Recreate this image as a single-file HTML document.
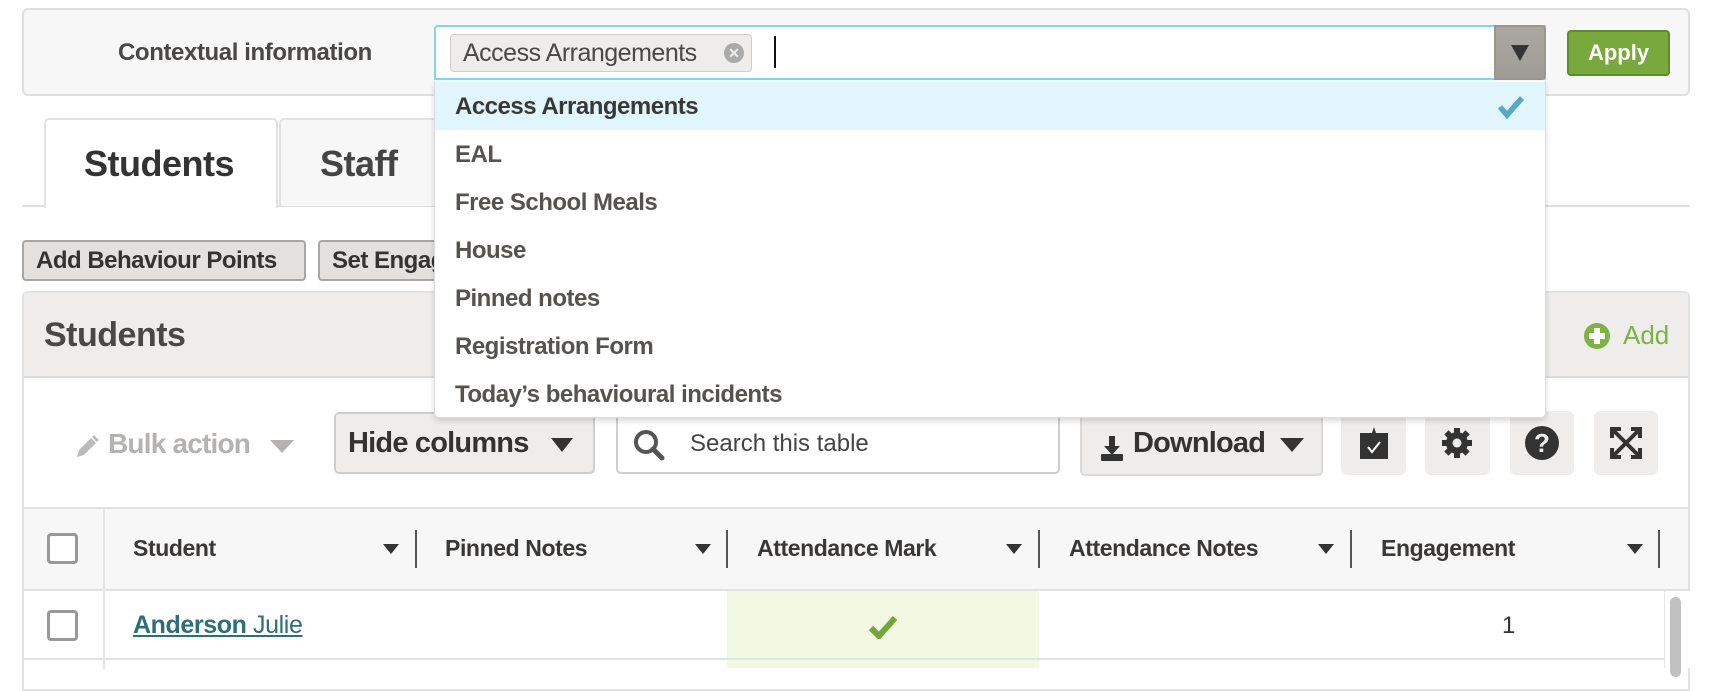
<!DOCTYPE html>
<html><head><meta charset="utf-8"><style>
*{box-sizing:border-box;margin:0;padding:0}
body{width:1710px;height:668px;overflow:hidden;background:#fff;font-family:"Liberation Sans",sans-serif;color:#3d3b39;position:relative}
.a{position:absolute}
.b{font-weight:bold}
</style></head><body>
<!-- top panel -->
<div class="a" style="left:22px;top:8px;width:1668px;height:88px;background:#f7f7f7;border:2px solid #e0e0e0;border-radius:6px"></div>
<div class="a b" style="left:118px;top:39px;font-size:24px;color:#4a4846;letter-spacing:-0.4px">Contextual information</div>
<div class="a" style="left:434px;top:25px;width:1112px;height:55px;background:#fff;border:2px solid #7dd8ec;border-radius:4px 0 0 0"></div>
<div class="a" style="left:450px;top:34px;width:302px;height:38px;background:#eeedec;border:1px solid #d0cecc;border-radius:4px"></div>
<div class="a" style="left:463px;top:39px;font-size:25px;color:#4a4846;letter-spacing:-0.5px">Access Arrangements</div>
<div class="a" style="left:724px;top:43px;width:20px;height:20px;border-radius:50%;background:#aaa;color:#eee;font-size:14px;line-height:20px;text-align:center;font-weight:bold">✕</div>
<div class="a" style="left:774px;top:36px;width:2px;height:32px;background:#111"></div>
<div class="a" style="left:1494px;top:25px;width:52px;height:55px;background:linear-gradient(#aaa6a2,#a09c98);border:2px solid #9a9692;border-radius:0 4px 4px 0"></div>
<div class="a" style="left:1511px;top:45px;width:0;height:0;border-left:9px solid transparent;border-right:9px solid transparent;border-top:16px solid #333"></div>
<div class="a b" style="left:1567px;top:30px;width:103px;height:46px;background:#79a93c;border:2px solid #5e8b2b;border-radius:4px;color:#fff;font-size:22px;text-align:center;line-height:42px">Apply</div>

<!-- tabs -->
<div class="a" style="left:22px;top:205px;width:1668px;height:2px;background:#ddd"></div>
<div class="a" style="left:44px;top:118px;width:234px;height:90px;background:#fff;border:2px solid #e2e2e2;border-bottom:none;border-radius:5px 5px 0 0"></div>
<div class="a b" style="left:84px;top:143px;font-size:36px;color:#333;letter-spacing:-0.5px">Students</div>
<div class="a" style="left:279px;top:118px;width:160px;height:88px;background:#f7f7f7;border:2px solid #e2e2e2;border-bottom:none;border-radius:5px 5px 0 0"></div>
<div class="a b" style="left:320px;top:143px;font-size:36px;color:#444;letter-spacing:-0.5px">Staff</div>

<!-- action buttons -->
<div class="a b" style="left:22px;top:240px;width:284px;height:41px;background:#e2e1df;border:2px solid #a9a7a5;border-radius:4px;font-size:24px;line-height:37px;padding-left:12px;color:#333;white-space:nowrap;letter-spacing:-0.5px">Add Behaviour Points</div>
<div class="a b" style="left:318px;top:240px;width:140px;height:41px;background:#e2e1df;border:2px solid #a9a7a5;border-radius:4px;font-size:24px;line-height:37px;padding-left:12px;color:#333;white-space:nowrap;overflow:hidden;letter-spacing:-0.5px">Set Engagement</div>

<!-- students panel -->
<div class="a" style="left:22px;top:291px;width:1668px;height:400px;border:2px solid #e2e2e2;border-radius:5px 5px 0 0"></div>
<div class="a" style="left:24px;top:293px;width:1664px;height:85px;background:#eeedec;border-bottom:2px solid #ddd"></div>
<div class="a b" style="left:44px;top:316px;font-size:34px;color:#4a4846;letter-spacing:-0.5px">Students</div>
<div class="a" style="left:1584px;top:323px;width:26px;height:26px;border-radius:50%;background:#7cb342"></div>
<div class="a" style="left:1594px;top:328px;width:6px;height:16px;background:#fff"></div>
<div class="a" style="left:1589px;top:333px;width:16px;height:6px;background:#fff"></div>
<div class="a" style="left:1623px;top:320px;font-size:26px;color:#7cb342">Add</div>

<!-- toolbar -->
<svg class="a" style="left:74px;top:433px" width="26" height="26" viewBox="0 0 26 26"><path d="M3 24l2-7L17 5l5 5-12 12z" fill="#bbb"/><path d="M18 4l2-2 5 5-2 2z" fill="#bbb"/></svg>
<div class="a b" style="left:108px;top:428px;font-size:28px;color:#b5b3b1;letter-spacing:-0.8px">Bulk action</div>
<div class="a" style="left:270px;top:440px;border-left:12px solid transparent;border-right:12px solid transparent;border-top:13px solid #b5b3b1"></div>
<div class="a b" style="left:334px;top:412px;width:261px;height:62px;background:#eeedec;border:2px solid #d0cecc;border-radius:5px;font-size:29px;line-height:58px;padding-left:12px;color:#333;letter-spacing:-0.8px">Hide columns</div>
<div class="a" style="left:551px;top:438px;border-left:11px solid transparent;border-right:11px solid transparent;border-top:14px solid #333"></div>
<div class="a" style="left:616px;top:412px;width:444px;height:62px;background:#fff;border:2px solid #d0cecc;border-radius:5px"></div>
<svg class="a" style="left:632px;top:428px" width="34" height="34" viewBox="0 0 34 34"><circle cx="14" cy="14" r="10" fill="none" stroke="#555" stroke-width="4"/><path d="M21 21l9 9" stroke="#555" stroke-width="5" stroke-linecap="round"/></svg>
<div class="a" style="left:690px;top:430px;font-size:24px;color:#444">Search this table</div>
<div class="a" style="left:1080px;top:412px;width:243px;height:64px;background:#eeedec;border:2px solid #dcdad8;border-radius:5px"></div>
<svg class="a" style="left:1100px;top:434px" width="24" height="28" viewBox="0 0 24 28"><path d="M9 2h6v10h5l-8 9-8-9h5z" fill="#333"/><rect x="1" y="20" width="22" height="7" rx="1" fill="#333"/></svg>
<div class="a b" style="left:1133px;top:427px;font-size:29px;color:#333;letter-spacing:-0.8px">Download</div>
<div class="a" style="left:1280px;top:438px;border-left:12px solid transparent;border-right:12px solid transparent;border-top:14px solid #333"></div>
<div class="a" style="left:1341px;top:411px;width:65px;height:64px;background:#eeedec;border-radius:6px"></div>
<svg class="a" style="left:1357px;top:425px" width="34" height="36" viewBox="0 0 34 36"><path d="M3 8h12l2-6 2 6h12v26H3z" fill="#333"/><path d="M11 22l4 5 8-10" stroke="#fff" stroke-width="2" fill="none"/></svg>
<div class="a" style="left:1425px;top:411px;width:65px;height:64px;background:#eeedec;border-radius:6px"></div>
<svg class="a" style="left:1440px;top:426px" width="34" height="34" viewBox="0 0 34 34"><g fill="#333"><circle cx="17" cy="17" r="11"/><rect x="14" y="2" width="6" height="30"/><rect x="2" y="14" width="30" height="6"/><rect x="14" y="2" width="6" height="30" transform="rotate(45 17 17)"/><rect x="14" y="2" width="6" height="30" transform="rotate(-45 17 17)"/></g><circle cx="17" cy="17" r="4.5" fill="#eeedec"/></svg>
<div class="a" style="left:1510px;top:411px;width:64px;height:64px;background:#eeedec;border-radius:6px"></div>
<div class="a b" style="left:1525px;top:426px;width:34px;height:34px;border-radius:50%;background:#333;color:#eeedec;text-align:center;font-size:26px;line-height:34px">?</div>
<div class="a" style="left:1594px;top:411px;width:64px;height:64px;background:#eeedec;border-radius:6px"></div>
<svg class="a" style="left:1609px;top:426px" width="34" height="34" viewBox="0 0 34 34"><g stroke="#333" stroke-width="4" fill="none"><path d="M5 5l24 24M29 5L5 29"/><path d="M3 12V3h9M22 3h9v9M31 22v9h-9M12 31H3v-9"/></g></svg>

<!-- table header -->
<div class="a" style="left:24px;top:507px;width:1664px;height:84px;background:#f7f7f7;border-top:2px solid #e2e2e2;border-bottom:2px solid #e2e2e2"></div>
<div class="a" style="left:103px;top:509px;width:2px;height:160px;background:#e6e6e6"></div>
<div class="a" style="left:47px;top:533px;width:31px;height:31px;border:3px solid #999;border-radius:4px;background:#fff"></div>
<div class="a b" style="left:133px;top:535px;font-size:23px;color:#3a3836;letter-spacing:-0.4px">Student</div>
<div class="a" style="left:383px;top:544px;border-left:8px solid transparent;border-right:8px solid transparent;border-top:10px solid #333"></div>
<div class="a" style="left:415px;top:530px;width:2px;height:38px;background:#555"></div>
<div class="a b" style="left:445px;top:535px;font-size:23px;color:#3a3836;letter-spacing:-0.4px">Pinned Notes</div>
<div class="a" style="left:695px;top:544px;border-left:8px solid transparent;border-right:8px solid transparent;border-top:10px solid #333"></div>
<div class="a" style="left:726px;top:530px;width:2px;height:38px;background:#555"></div>
<div class="a b" style="left:757px;top:535px;font-size:23px;color:#3a3836;letter-spacing:-0.4px">Attendance Mark</div>
<div class="a" style="left:1006px;top:544px;border-left:8px solid transparent;border-right:8px solid transparent;border-top:10px solid #333"></div>
<div class="a" style="left:1038px;top:530px;width:2px;height:38px;background:#555"></div>
<div class="a b" style="left:1069px;top:535px;font-size:23px;color:#3a3836;letter-spacing:-0.4px">Attendance Notes</div>
<div class="a" style="left:1318px;top:544px;border-left:8px solid transparent;border-right:8px solid transparent;border-top:10px solid #333"></div>
<div class="a" style="left:1350px;top:530px;width:2px;height:38px;background:#555"></div>
<div class="a b" style="left:1381px;top:535px;font-size:23px;color:#3a3836;letter-spacing:-0.4px">Engagement</div>
<div class="a" style="left:1627px;top:544px;border-left:8px solid transparent;border-right:8px solid transparent;border-top:10px solid #333"></div>
<div class="a" style="left:1658px;top:530px;width:2px;height:38px;background:#555"></div>

<!-- row -->
<div class="a" style="left:727px;top:591px;width:312px;height:77px;background:#f3f8e2"></div>
<div class="a" style="left:24px;top:658px;width:1640px;height:2px;background:#e0e4ea"></div>
<div class="a" style="left:47px;top:610px;width:31px;height:31px;border:3px solid #999;border-radius:4px;background:#fff"></div>
<div class="a" style="left:133px;top:611px;font-size:25px;color:#2e6e78;text-decoration:underline;letter-spacing:-0.4px"><b>Anderson</b> Julie</div>
<svg class="a" style="left:869px;top:615px" width="28" height="24" viewBox="0 0 28 24"><path d="M2 13l8 8L26 3" stroke="#72a63b" stroke-width="6" fill="none"/></svg>
<div class="a" style="left:1502px;top:612px;font-size:24px;color:#333">1</div>
<div class="a" style="left:1664px;top:591px;width:26px;height:77px;background:#fff;border-left:1px solid #e6e6e6"></div>
<div class="a" style="left:1670px;top:597px;width:11px;height:80px;background:#c1c1c1;border-radius:6px"></div>

<!-- dropdown -->
<div class="a" style="left:434px;top:81px;width:1112px;height:337px;background:#fff;border:1px solid #ddd;border-top:none;border-radius:0 0 5px 5px;box-shadow:0 3px 6px rgba(0,0,0,.15)"></div>
<div class="a" style="left:435px;top:82px;width:1110px;height:48px;background:#e0f6fc"></div>
<svg class="a" style="left:1497px;top:95px" width="28" height="24" viewBox="0 0 28 24"><path d="M3 12l7 8L25 3" stroke="#56a9c0" stroke-width="5.5" fill="none"/></svg>
<div class="a b" style="left:455px;top:93px;font-size:24px;color:#3a3836;line-height:28px;letter-spacing:-0.5px">
<div style="height:48px">Access Arrangements</div>
<div style="height:48px;color:#55524f">EAL</div>
<div style="height:48px;color:#55524f">Free School Meals</div>
<div style="height:48px;color:#55524f">House</div>
<div style="height:48px;color:#55524f">Pinned notes</div>
<div style="height:48px;color:#55524f">Registration Form</div>
<div style="height:48px;color:#55524f">Today’s behavioural incidents</div>
</div>
</body></html>
